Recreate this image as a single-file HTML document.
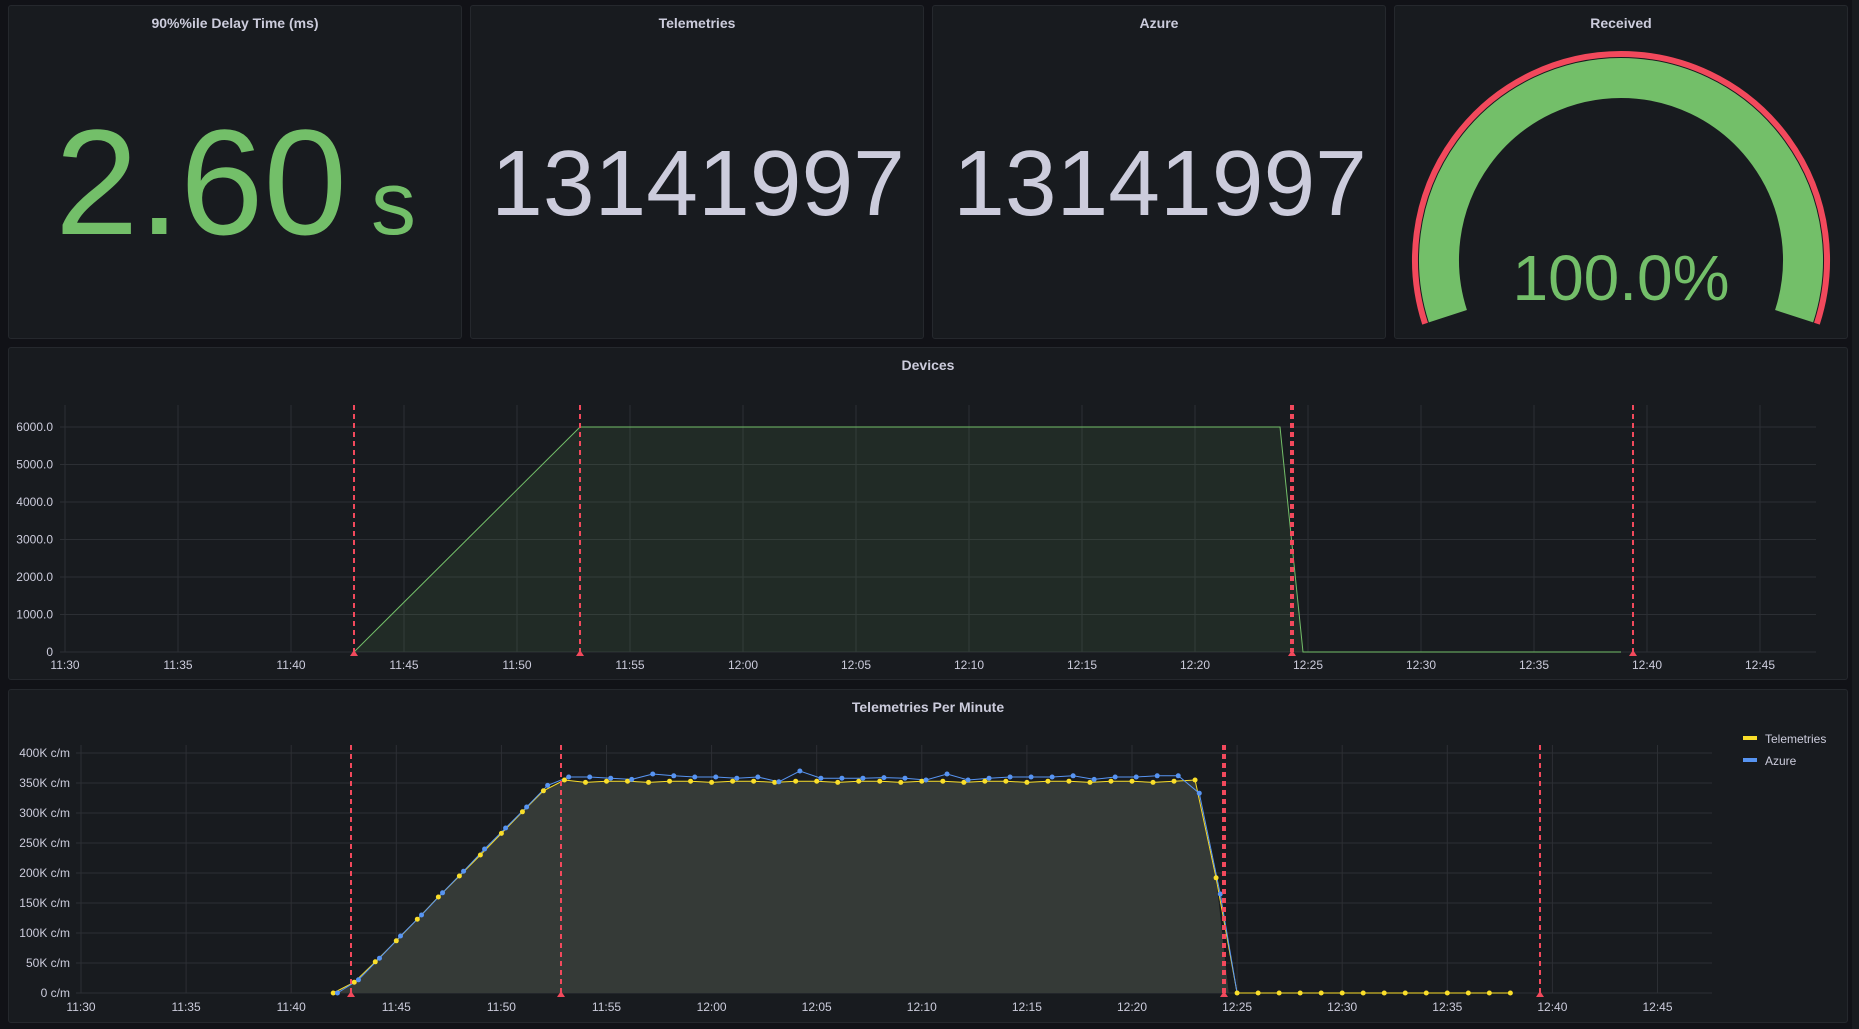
<!DOCTYPE html>
<html><head><meta charset="utf-8">
<style>
html,body{margin:0;padding:0;background:#111217;width:1859px;height:1029px;overflow:hidden;font-family:"Liberation Sans",sans-serif}
.p{position:absolute;background:#181b1f;border:1px solid #25282d;border-radius:3px;box-sizing:border-box}
.t{position:absolute;left:0;right:0;text-align:center;color:#ccccdc;font-size:14px;font-weight:bold;top:9px}
.big{position:absolute;color:#ccccdc;white-space:nowrap}
svg{position:absolute;left:0;top:0}
</style></head><body>
<div class="p" style="left:8px;top:5px;width:454px;height:334px"><div class="t">90%%ile Delay Time (ms)</div>
<div class="big" style="left:46px;top:90px;font-size:150px;color:#73bf69">2.60<span style="font-size:90px;margin-left:24px">s</span></div></div>
<div class="p" style="left:470px;top:5px;width:454px;height:334px"><div class="t">Telemetries</div>
<div class="big" style="left:20px;top:124px;font-size:93px;width:414px;text-align:center">13141997</div></div>
<div class="p" style="left:932px;top:5px;width:454px;height:334px"><div class="t">Azure</div>
<div class="big" style="left:20px;top:124px;font-size:93px;width:414px;text-align:center">13141997</div></div>
<div class="p" style="left:1394px;top:5px;width:454px;height:334px"><div class="t">Received</div></div>
<div style="position:absolute;left:1852px;top:0;width:7px;height:1029px;background:#181b1f"></div>
<div class="p" style="left:8px;top:347px;width:1840px;height:333px"><div class="t" style="top:9px">Devices</div></div>
<div class="p" style="left:8px;top:689px;width:1840px;height:334px"><div class="t" style="top:9px">Telemetries Per Minute</div></div>
<svg id="s" width="1859" height="1029" font-family="Liberation Sans, sans-serif" font-size="12" fill="#ccccdc"></svg>
<script>
var s=document.getElementById('s'),h='';
var cx=1621,cy=260;
function arc(r,a0,a1){var p=function(a){a=a*Math.PI/180;return (cx+r*Math.cos(a)).toFixed(1)+','+(cy-r*Math.sin(a)).toFixed(1)};return 'M'+p(a0)+' A'+r+','+r+' 0 1 1 '+p(a1);}
h+='<path d="'+arc(206,198,-18)+'" fill="none" stroke="#f2495c" stroke-width="6"/>';
h+='<path d="'+arc(182,198,-18)+'" fill="none" stroke="#73bf69" stroke-width="40"/>';
h+='<text x="1621" y="300" text-anchor="middle" font-size="64" fill="#73bf69">100.0%</text>';
var x0=65,dx=22.6;
for(var i=0;i<=15;i++){var x=x0+i*dx*5;h+='<line x1="'+x+'" y1="405" x2="'+x+'" y2="652" stroke="#2c2f34"/>';var m=30+i*5,hh=11+Math.floor(m/60);m%=60;h+='<text x="'+x+'" y="669" text-anchor="middle">'+hh+':'+(m<10?'0':'')+m+'</text>';}
for(var j=0;j<=6;j++){var y=652-j*37.5;h+='<line x1="60" y1="'+y+'" x2="1816" y2="'+y+'" stroke="#2c2f34"/>';h+='<text x="53" y="'+(y+4)+'" text-anchor="end">'+(j?j*1000+'.0':'0')+'</text>';}
h+='<path d="M354,652 L580,427 L1280,427 L1303,652 Z" fill="rgba(115,191,105,0.1)"/>';
h+='<polyline points="354,652 580,427 1280,427 1303,652 1621,652" fill="none" stroke="#73bf69" stroke-width="1"/>';
[[354,2],[580,2],[1292,4],[1633,2]].forEach(function(a){h+='<line x1="'+a[0]+'" y1="405" x2="'+a[0]+'" y2="652" stroke="#f2495c" stroke-width="'+a[1]+'" stroke-dasharray="5,4"/><path d="M'+(a[0]-4)+',656 L'+(a[0]+4)+',656 L'+a[0]+',650Z" fill="#f2495c"/>';});
var X0=81,DX=21.02;
for(var i=0;i<=15;i++){var x=X0+i*DX*5;h+='<line x1="'+x+'" y1="745" x2="'+x+'" y2="993" stroke="#2c2f34"/>';var m=30+i*5,hh=11+Math.floor(m/60);m%=60;h+='<text x="'+x+'" y="1011" text-anchor="middle">'+hh+':'+(m<10?'0':'')+m+'</text>';}
for(var j=0;j<=8;j++){var y=993-j*30;h+='<line x1="76" y1="'+y+'" x2="1712" y2="'+y+'" stroke="#2c2f34"/>';h+='<text x="70" y="'+(y+4)+'" text-anchor="end">'+(j*50)+(j?'K':'')+' c/m</text>';}
function Y(v){return 993-v*0.6}
var yel=[0,18,52,87,123,160,195,230,266,302,337,355];
for(var k=0;k<29;k++)yel.push(k%3==0?351:353);
yel.push(355);yel.push(192);for(k=0;k<14;k++)yel.push(0);
var blu=[0,22,58,95,130,167,203,240,275,310,346,360];
var fl=[360,358,356,365,362,360,360,358,360,352,370,358,358,358,359,358,355,365,355,358,360,360,360,362,356,360,360,362,362,354];
blu=blu.concat(fl.slice(0,29));blu.push(333);blu.push(165);
var yp=[],bp=[];
yel.forEach(function(v,i){yp.push([X0+(12+i)*DX,Y(v)])});
blu.forEach(function(v,i){bp.push([X0+(12.2+i)*DX,Y(v)])});
var f='M'+yp[0][0]+',993';yp.slice(0,43).forEach(function(p){f+=' L'+p[0]+','+p[1]});f+=' L'+(X0+54.6*DX)+',993 Z';
h+='<path d="'+f+'" fill="#353a37"/>';
h+='<polyline points="'+yp.map(function(p){return p.join(',')}).join(' ')+'" fill="none" stroke="#fade2a" stroke-width="1"/>';
h+='<polyline points="'+bp.map(function(p){return p.join(',')}).join(' ')+' '+(X0+55*DX)+',993" fill="none" stroke="#5794f2" stroke-width="1"/>';
yp.forEach(function(p){h+='<circle cx="'+p[0]+'" cy="'+p[1]+'" r="2.5" fill="#fade2a"/>'});
bp.forEach(function(p){h+='<circle cx="'+p[0]+'" cy="'+p[1]+'" r="2.5" fill="#5794f2"/>'});
[[351,2],[561,2],[1224,4],[1540,2]].forEach(function(a){h+='<line x1="'+a[0]+'" y1="745" x2="'+a[0]+'" y2="993" stroke="#f2495c" stroke-width="'+a[1]+'" stroke-dasharray="5,4"/><path d="M'+(a[0]-4)+',997 L'+(a[0]+4)+',997 L'+a[0]+',991Z" fill="#f2495c"/>';});
h+='<rect x="1743" y="736" width="14" height="4" fill="#fade2a"/><text x="1765" y="743">Telemetries</text>';
h+='<rect x="1743" y="758" width="14" height="4" fill="#5794f2"/><text x="1765" y="765">Azure</text>';
s.innerHTML=h;
</script>
</body></html>
